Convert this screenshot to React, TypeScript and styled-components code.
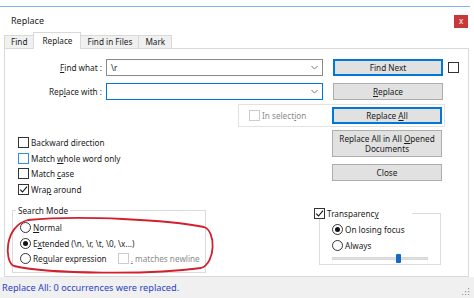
import React from "react"
import styled, { createGlobalStyle } from "styled-components"

const GlobalStyle = createGlobalStyle`
    html, body {
        margin: 0;
        padding: 0;
        background: #fff;
    }
    body {
        width: 474px;
        height: 298px;
        overflow: hidden;
        font-family: "Noto Sans", "Open Sans", sans-serif;
        font-size: 8.2px;
        color: #1b1b1b;
    }
`

const Dialog = styled.div`
    position: relative;
    width: 474px;
    height: 298px;
    display: flex;
    flex-direction: column;
    background: #fff;
`

const Frame = styled.div`
    margin-top: 6px;
    width: 470px;
    border-top: 1px solid #82b6e8;
    display: flex;
    flex-direction: column;
`

const TitleBar = styled.div`
    height: 24px;
    display: flex;
    align-items: flex-start;
    justify-content: space-between;
    padding: 0 2px 0 11px;
`

const Title = styled.div`
    margin-top: 8px;
    font-size: 9px;
    line-height: 12px;
`

const CloseBox = styled.div`
    margin-top: 8px;
    width: 14px;
    height: 13px;
    background: #c8383a;
    color: #fff;
    font-size: 8px;
    line-height: 12px;
    text-align: center;
`

const TabStrip = styled.div`
    height: 17px;
    display: flex;
    align-items: flex-end;
    padding-left: 4px;
`

const Tab = styled.div<{ $active?: boolean }>`
    position: relative;
    z-index: ${p => p.$active ? 2 : 1};
    height: ${p => p.$active ? 17 : 13}px;
    margin-bottom: ${p => p.$active ? -1 : 0}px;
    margin-right: -1px;
    padding: ${p => p.$active ? "2px 8px 0" : "0 6px"};
    box-sizing: border-box;
    border: 1px solid #d9d9d9;
    border-bottom: none;
    background: ${p => p.$active ? "#fff" : "#f0f0f0"};
    line-height: 12px;
    white-space: nowrap;
`

const Panel = styled.div`
    margin-left: 4px;
    width: 465px;
    height: 229px;
    box-sizing: border-box;
    border: 1px solid #d9d9d9;
    background: #fff;
    display: flex;
    flex-direction: column;
`

const FieldRow = styled.div<{ $top: number }>`
    display: flex;
    align-items: center;
    height: 17px;
    margin-top: ${p => p.$top}px;
`

const FieldLabel = styled.div`
    width: 97px;
    flex-shrink: 0;
    text-align: right;
    white-space: nowrap;
`

const Combo = styled.div<{ $focused?: boolean }>`
    width: 217px;
    height: 17px;
    margin-left: 4px;
    box-sizing: border-box;
    border: 1px solid ${p => p.$focused ? "#0078d7" : "#8a8a8a"};
    display: flex;
    align-items: center;
    justify-content: space-between;
    padding: 0 4px 0 4px;
`

const Button = styled.div<{ $primary?: boolean; $tall?: boolean }>`
    width: 110px;
    height: ${p => p.$tall ? 27 : 17}px;
    flex-shrink: 0;
    box-sizing: border-box;
    border: 1px solid ${p => p.$primary ? "#0078d7" : "#adadad"};
    box-shadow: ${p => p.$primary ? "inset 0 0 0 1px #0078d7" : "none"};
    background: #e1e1e1;
    display: flex;
    align-items: center;
    justify-content: center;
    text-align: center;
    line-height: 10px;
`

const RowButton = styled(Button)`
    margin-left: 10px;
`

const Key = styled.span`
    text-decoration: underline;
    text-underline-offset: 1px;
`

const Box = styled.div<{ $checked?: boolean; $disabled?: boolean; $hover?: boolean }>`
    width: 11px;
    height: 11px;
    flex-shrink: 0;
    box-sizing: border-box;
    border: 1px solid ${p => p.$disabled ? "#cccccc" : p.$hover ? "#2f8fdf" : "#333"};
    background: #fff;
    display: flex;
    align-items: center;
    justify-content: center;
`

const Round = styled(Box)`
    border-radius: 50%;
    border-color: #333;
`

const Dot = styled.div`
    width: 5px;
    height: 5px;
    border-radius: 50%;
    background: #111;
`

const SideBox = styled(Box)`
    margin-left: 5px;
`

const SelectionGroup = styled.div`
    margin: 4px 0 0 233px;
    width: 207px;
    height: 23px;
    box-sizing: border-box;
    border: 1px solid #e2e2e2;
    display: flex;
    align-items: center;
    justify-content: space-between;
    padding: 0 2px 0 10px;
`

const Option = styled.div<{ $disabled?: boolean }>`
    display: flex;
    align-items: center;
    gap: 2px;
    height: 15.5px;
    white-space: nowrap;
    color: ${p => p.$disabled ? "#8c8c8c" : "inherit"};
`

const Lower = styled.div`
    display: flex;
    flex: 1;
`

const LeftCol = styled.div`
    margin-left: 7px;
    width: 194px;
    display: flex;
    flex-direction: column;
    padding-top: 8px;
`

const CheckList = styled.div`
    padding-left: 6px;
`

const Group = styled.fieldset`
    margin: 0;
    min-width: 0;
    box-sizing: border-box;
    border: 1px solid #dcdcdc;
`

const ModeGroup = styled(Group)`
    margin-top: 8px;
    height: 68px;
    padding: 4px 0 0 7px;
`

const Legend = styled.legend`
    margin-left: -4px;
    padding: 0 2px;
    line-height: 11px;
`

const SubOption = styled(Option)`
    margin-left: 9px;
`

const RightCol = styled.div`
    margin-left: 108px;
    display: flex;
    flex-direction: column;
`

const ButtonStack = styled.div`
    margin: 3px 0 0 18px;
    display: flex;
    flex-direction: column;
    gap: 7px;
`

const TransGroup = styled(Group)`
    margin: 27px 0 0 5px;
    width: 122px;
    padding: 3px 0 4px 12px;
`

const TransLegend = styled.legend`
    margin-left: -18px;
    width: 98px;
    padding: 0;
    line-height: 11px;
    display: flex;
    align-items: center;
    gap: 2px;
`

const Track = styled.div`
    position: relative;
    margin-top: 4px;
    width: 96px;
    height: 3px;
    background: #e3e3e3;
    border: 1px solid #d6d6d6;
    box-sizing: border-box;
`

const Thumb = styled.div`
    position: absolute;
    top: -4px;
    width: 5px;
    height: 9px;
    margin-left: -2px;
    background: #1668c4;
    border-radius: 1px;
`

const StatusBar = styled.div`
    flex: 1;
    background: #f0f0f0;
    display: flex;
    align-items: center;
    justify-content: space-between;
    padding: 0 4px 0 2px;
    color: #2a3fc6;
    font-size: 9.2px;
`

const Grip = styled.svg`
    align-self: flex-end;
    margin-bottom: 3px;
`

const Annotation = styled.svg`
    position: absolute;
    left: 0;
    top: 0;
    pointer-events: none;
`

const Chevron = () => (
    <svg width="7" height="5" viewBox="0 0 7 5">
        <polyline points="0.5,1 3.5,4 6.5,1" fill="none" stroke="#666" strokeWidth="0.9" />
    </svg>
)

const Tick = () => (
    <svg width="9" height="9" viewBox="0 0 9 9">
        <polyline points="1.2,4.6 3.5,7 8,1.6" fill="none" stroke="#111" strokeWidth="1.1" />
    </svg>
)

const Check = ({ label, checked, hover }: { label: React.ReactNode; checked?: boolean; hover?: boolean }) => (
    <Option>
        <Box $checked={checked} $hover={hover}>{checked && <Tick />}</Box>
        <span>{label}</span>
    </Option>
)

const Radio = ({ label, checked }: { label: React.ReactNode; checked?: boolean }) => (
    <Option>
        <Round>{checked && <Dot />}</Round>
        <span>{label}</span>
    </Option>
)

const App = () => {
    const opacity = 0.69

    return (
        <Dialog>
            <GlobalStyle />
            <Frame>
                <TitleBar>
                    <Title>Replace</Title>
                    <CloseBox>x</CloseBox>
                </TitleBar>
                <TabStrip>
                    <Tab>Find</Tab>
                    <Tab $active>Replace</Tab>
                    <Tab>Find in Files</Tab>
                    <Tab>Mark</Tab>
                </TabStrip>
                <Panel>
                    <FieldRow $top={10}>
                        <FieldLabel><Key>F</Key>ind what :</FieldLabel>
                        <Combo><span>\r</span><Chevron /></Combo>
                        <RowButton $primary>Find Next</RowButton>
                        <SideBox />
                    </FieldRow>
                    <FieldRow $top={7}>
                        <FieldLabel>Rep<Key>l</Key>ace with :</FieldLabel>
                        <Combo $focused><span /><Chevron /></Combo>
                        <RowButton><span><Key>R</Key>eplace</span></RowButton>
                    </FieldRow>
                    <SelectionGroup>
                        <Option $disabled>
                            <Box $disabled />
                            <span>In select<Key>i</Key>on</span>
                        </Option>
                        <Button $primary><span>Replace <Key>A</Key>ll</span></Button>
                    </SelectionGroup>
                    <Lower>
                        <LeftCol>
                            <CheckList>
                                <Check label="Backward direction" />
                                <Check hover label={<>Match <Key>w</Key>hole word only</>} />
                                <Check label={<>Match <Key>c</Key>ase</>} />
                                <Check checked label={<>Wra<Key>p</Key> around</>} />
                            </CheckList>
                            <ModeGroup>
                                <Legend>Search Mode</Legend>
                                <Radio label={<><Key>N</Key>ormal</>} />
                                <Radio checked label={<>E<Key>x</Key>tended (\n, \r, \t, \0, \x...)</>} />
                                <Option>
                                    <Round />
                                    <span>Re<Key>g</Key>ular expression</span>
                                    <SubOption $disabled>
                                        <Box $disabled />
                                        <span><Key>.</Key> matches newline</span>
                                    </SubOption>
                                </Option>
                            </ModeGroup>
                        </LeftCol>
                        <RightCol>
                            <ButtonStack>
                                <Button $tall><span>Replace All in All <Key>O</Key>pened<br />Documents</span></Button>
                                <Button>Close</Button>
                            </ButtonStack>
                            <TransGroup>
                                <TransLegend>
                                    <Box $checked><Tick /></Box>
                                    <span>Transparenc<Key>y</Key></span>
                                </TransLegend>
                                <Radio checked label="On losing focus" />
                                <Radio label="Always" />
                                <Track>
                                    <Thumb style={{ left: `${opacity * 100}%` }} />
                                </Track>
                            </TransGroup>
                        </RightCol>
                    </Lower>
                </Panel>
            </Frame>
            <StatusBar>
                <span>Replace All: 0 occurrences were replaced.</span>
                <Grip width="8" height="8" viewBox="0 0 8 8">
                    {[[6, 1], [6, 4], [3, 4], [6, 7], [3, 7], [0, 7]].map(([x, y]) => (
                        <rect key={`${x}-${y}`} x={x} y={y} width="1.2" height="1.2" fill="#9a9a9a" />
                    ))}
                </Grip>
            </StatusBar>
            <Annotation width="474" height="298" viewBox="0 0 474 298">
                <path
                    d="M 28 220 C 80 215, 170 220, 204 227 C 216 231, 216 263, 201 268 C 150 275, 50 274, 14 266 C 4 262, 4 226, 28 220 Z"
                    fill="none"
                    stroke="#d2202e"
                    strokeWidth="1.8"
                />
            </Annotation>
        </Dialog>
    )
}

export default App
